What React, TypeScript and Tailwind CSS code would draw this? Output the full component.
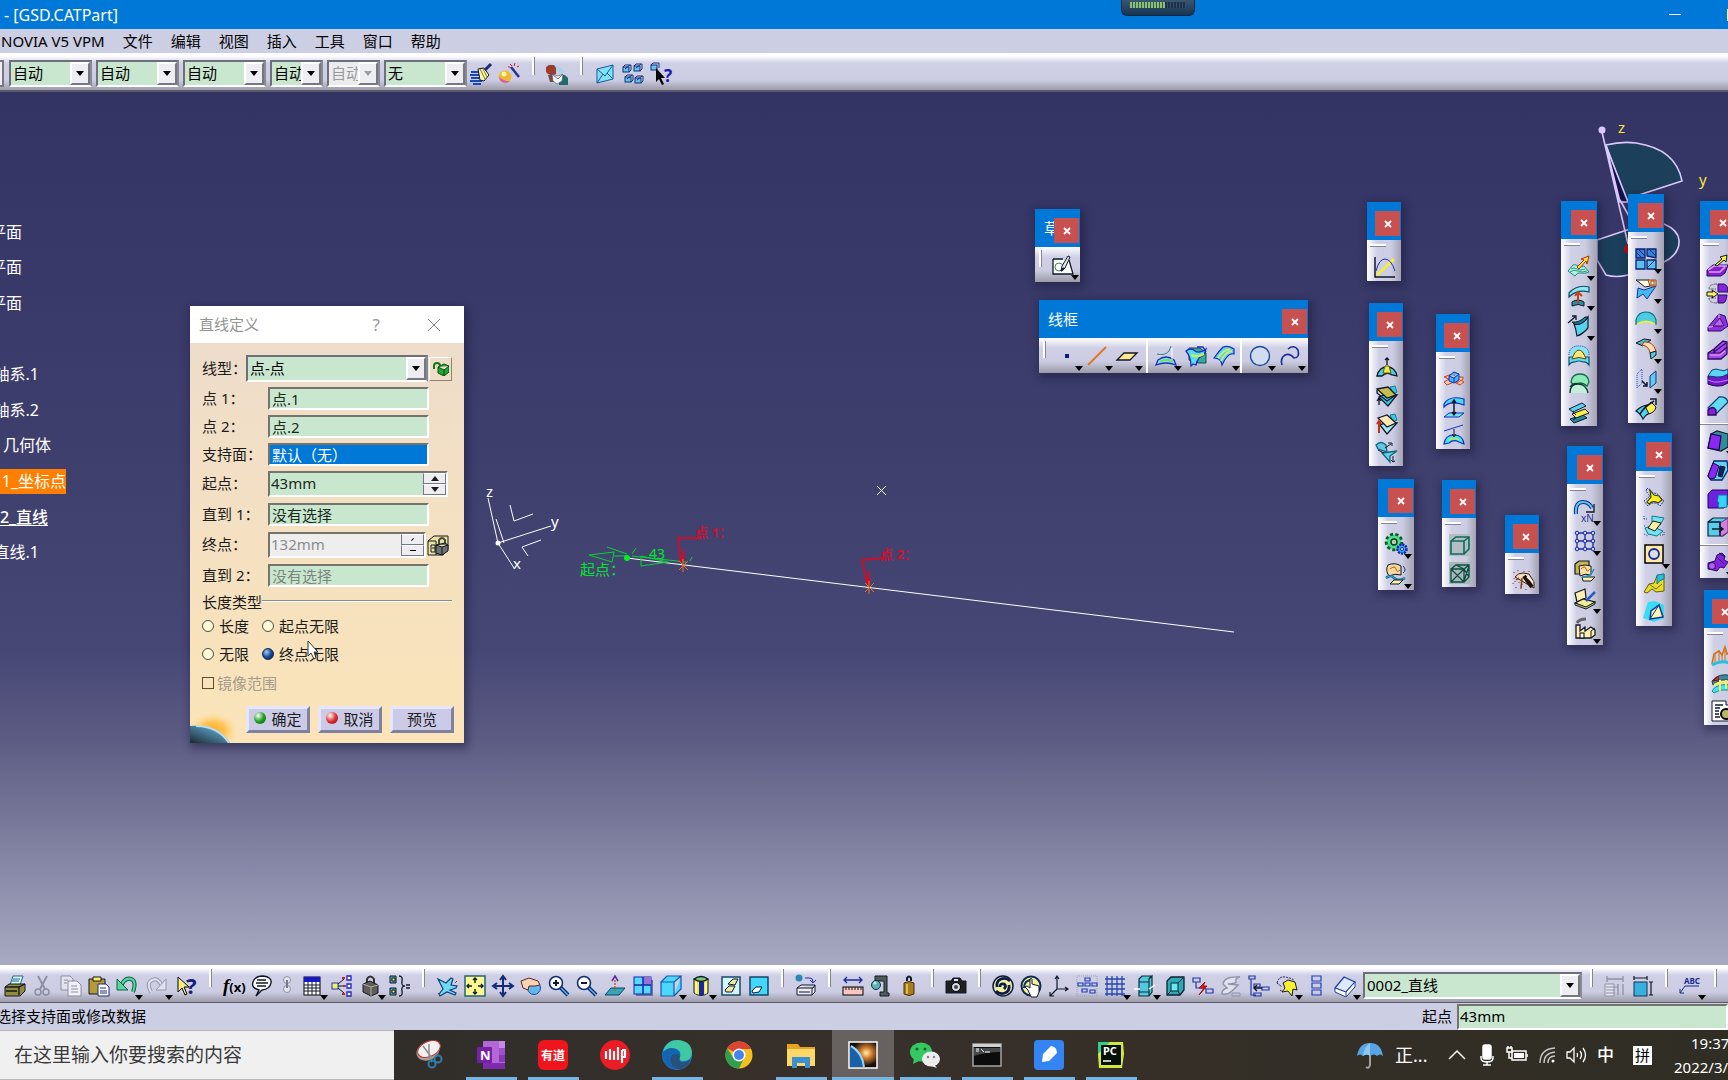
import React from "react";

type PathProps = { d: string; f?: string; s?: string; w?: number };

const P = ({ d, f = "none", s = "#101828", w = 1 }: PathProps) => (
  <path d={d} fill={f} stroke={s} strokeWidth={w} />
);

const icons: Record<string, React.ReactNode> = {
  // graphic properties
  brush: (
    <>
      <P d="M1 9h8M0 12h10M1 15h11M0 18h12M3 21h8" s="#1747b8" w={2} />
      <P d="M8 6l6-1 5 7-5 6-4-1z" f="#fff6b0" />
      <P d="M10 6l5 10M13 6l4 8" s="#8a7a20" />
      <P d="M15 7l6-6" s="#1a2a80" w={3} />
    </>
  ),
  wand: (
    <>
      <circle cx="7" cy="14" r="6.5" fill="#f0b830" />
      <path d="M1 14a6.500 6.500 0 0 0 11 4q-5 1-11-4z" fill="#c060d8" />
      <circle cx="6" cy="11" r="2.5" fill="#fff7a0" />
      <P d="M13 4l8 10" s="#28348c" w={2.5} />
      <P d="M12 1l2 2M17 0l-1 3M19 4l2-1M10 4h2" s="#e02020" />
    </>
  ),
  cubes: (
    <>
      <path d="M1 0l11 3 8 6-6 1z" fill="#a8d4e8" />
      <path d="M0 4l3-2h5l2 3v6H2L0 9z" fill="#a03a2c" />
      <path d="M2 12l5-2 4 3v6H4z" fill="#7a4a44" />
      <path d="M13 12h6l3 3v7h-9z" fill="#1f6a70" />
      <path d="M6 11l6 2 5-2-1 7-5 3-4-3z" fill="#f4f4f4" stroke="#505868" strokeWidth=".6" />
      <path d="M6 11l6 5 5-5" fill="none" stroke="#505868" strokeWidth=".8" />
    </>
  ),
  envelope: (
    <>
      <P d="M3 6L19 2v14L3 20z" f="#7fe3f2" s="#1c56a8" />
      <P d="M3 6l8 7 8-11M3 20l6-9M19 16l-6-6" s="#1c56a8" />
    </>
  ),
  fourCubes: (
    <>
      {[[1, 3], [12, 2], [3, 13], [13, 14]].map(([x, y]) => (
        <g key={x + "-" + y}>
          <rect x={x} y={y + 1} width="6" height="5" fill="#5ec4ea" stroke="#14307c" />
          <P d={`M${x} ${y + 1}l2-2h6v5l-2 2M${x + 2} ${y + 3}l5-4`} s="#14307c" />
        </g>
      ))}
    </>
  ),
  whatCube: (
    <>
      <rect x="1" y="2" width="6" height="5" fill="#5ec4ea" stroke="#14307c" />
      <P d="M1 2l2-2h6v5" s="#14307c" />
      <path d="M6 5v14l3-3 3 6 2-1-3-6h4z" fill="#000" />
      <text x="14" y="19" fontSize="17" fontWeight="700" fill="#1a1ab4" fontFamily="Noto Sans, sans-serif">?</text>
    </>
  ),
  // wireframe
  sketch: (
    <>
      <P d="M1 5h10M1 5v15h20L17 6" f="#fff" w={1.3} />
      <circle cx="7" cy="13" r="4" fill="none" stroke="#3c8c50" />
      <P d="M9 17l1-5 6-10 2 1-5 11z" f="#dfe6ea" />
      <P d="M9 17l3-3" w={2} />
    </>
  ),
  point: <rect x="9" y="9" width="4" height="4" fill="#0a1e78" />,
  line: <P d="M2 20L20 2" s="#e07828" w={2} />,
  plane: <P d="M1 15L8 8h13l-7 7z" f="#ffe98c" w={1.3} />,
  proj: (
    <>
      <P d="M3 15q8-6 16 0l2 5q-10-4-20 0z" f="#7fe3f2" s="#1c2cc0" w={1.3} />
      <P d="M5 17q6-4 13 0" s="#7ae05a" w={2} />
      <P d="M2 9q8 2 12-3l2-5" s="#2a8a7a" />
      <P d="M17 3v12" s="#fff" />
    </>
  ),
  inter: (
    <>
      <P d="M4 3h11l6 5v10h-7l-10-3z" f="#3aa898" s="#0c4c50" />
      <P d="M1 6q5-4 9 0 4 3 11-2l-2 6q-6 1-8 10l-3-1-2 2Q6 12 1 6z" f="#58dcf0" s="#1c2cc0" w={1.3} />
      <P d="M6 10q6 3 13-1" s="#c8f050" w={2.5} />
      <P d="M12 2h6l3 5" s="#1c2cc0" w={1.3} />
    </>
  ),
  parallel: (
    <>
      <P d="M1 13Q6 6 10 2q6-2 11 2v5q-6-2-12 11-1-7-8-7z" f="#56d0ee" s="#1c2cc0" w={1.2} />
      <P d="M5 13Q10 5 17 4M8 16q4-9 11-10" s="#c8f070" w={1.8} />
    </>
  ),
  circle: <circle cx="11" cy="11" r="9.5" fill="#d0dcf0" stroke="#1c4a9c" strokeWidth="1.4" />,
  spline: <P d="M9 4q6-5 10 1 2 8-4 8-4-5-9-3-5 3-3 10" s="#1c2c9c" w={1.6} />,
  graph: (
    <>
      <P d="M3 19L20 3" s="#f2f03c" w={3} />
      <P d="M1 1v20h20" w={1.5} />
      <P d="M2 15Q5 3 11 3t10 12" s="#2030a8" />
    </>
  ),
  // advanced surfaces
  dome: (
    <>
      <P d="M1 19q2-9 10-9t10 9l-5-1q-5-4-10 1z" f="#4cd0ea" w={1.3} />
      <P d="M7 16l2-7h4l2 7z" f="#f4e840" s="#5c5810" />
      <P d="M11 8V1M9 3l2-2 2 2" w={1.3} />
    </>
  ),
  layers: (
    <>
      <P d="M3 12l5-2 13 0-9 11z" f="#35c8e0" w={1.3} />
      <P d="M14 2l5-1 2 6-4 2z" f="#35c8e0" s="#1c7c90" />
      <P d="M1 4l11-2 8 8-9 3z" f="#c8bc4c" w={1.3} />
      <P d="M3 13v7M1 16l2-3 2 3M1 5v3l10 8 9-6" w={1.3} />
    </>
  ),
  layersRed: (
    <>
      <P d="M4 12l5-2 12 0-10 11z" f="#9fe8f0" w={1.3} />
      <P d="M14 2l5-1 2 6-4 2z" f="#35c8e0" s="#1c7c90" />
      <P d="M2 5l9-3 9 8-9 4z" f="#fbe6b4" w={1.3} />
      <P d="M3 20V8M1 11l2-3 2 3" s="#c83010" w={2} />
    </>
  ),
  blend: (
    <>
      <P d="M0 4q5-5 10 0l1 7-9-3z" f="#5cc8e6" s="#14647c" w={1.3} />
      <P d="M6 12l15-2-7 5 0 6z" f="#5cd4ee" s="#14647c" w={1.3} />
      <P d="M2 9l6 3M9 7l6-4M12 2h4v3M17 15v6M15 19l2 2 2-1" />
    </>
  ),
  flatCube: (
    <>
      <P d="M1 9l8-3 12 8-4 3-6-3-7 3-3-3 5-3z" f="#f6c8a0" s="#d04020" />
      <P d="M13 9h7v2l-6 4z" f="#f6c8a0" s="#d04020" />
      <P d="M6 8l5-4 5 2v6l-5 3-5-2zM6 8l5 2 5-4M11 10v5" f="#3ab8f0" s="#1030c8" />
    </>
  ),
  thick: (
    <>
      <P d="M1 8q5-9 20-5v6Q7 4 1 11z" f="#4cd8f0" s="#1030c8" w={1.2} />
      <P d="M1 21l5-4h15l-5 4z" f="#6fe8f0" s="#1030c8" />
      <P d="M11 5v13M9 7l2-3 2 3M9 16l2 3 2-3" w={1.5} />
    </>
  ),
  wrap: (
    <>
      <P d="M1 7l19-6" s="#2030c0" />
      <P d="M1 20q1-9 10-9t10 9l-5-2q-5-3-10 1z" f="#4ce0f0" s="#1030c8" w={1.2} />
      <P d="M6 16q5-3 10 0" s="#a0f060" w={2} />
      <P d="M11 5v8M9 10l2 3 2-3" />
    </>
  ),
  gear: (
    <>
      <circle cx="9" cy="9" r="7.5" fill="#50d888" stroke="#0c5c30" strokeWidth="3.5" strokeDasharray="3 2.200" />
      <circle cx="9" cy="9" r="6.5" fill="#50e088" />
      <circle cx="9" cy="9" r="3" fill="#b8ccb8" stroke="#0c3c20" strokeWidth="1.4" />
      <circle cx="17" cy="16" r="4.5" fill="#38a8f4" stroke="#1028a0" strokeWidth="2.500" strokeDasharray="2 1" />
      <circle cx="17" cy="16" r="1.5" fill="#fff" stroke="#1028a0" />
    </>
  ),
  scroll: (
    <>
      <P d="M3 2q7-3 13 1v9q-6-2-12 1Q0 7 3 2z" f="#f8d898" />
      <P d="M5 6q5-4 6 0t4 1" s="#a06020" />
      <P d="M1 15q5-4 8 0 5 4 11 0" s="#105c90" w={2.5} />
      <P d="M1 15q5-4 8 0 5 4 11 0" s="#40b8d8" />
      <P d="M5 21l4-4h9l-4 4z" f="#fff3a0" />
      <P d="M18 3q4 4 0 7" s="#1c4080" />
    </>
  ),
  cube: (
    <>
      <rect width="22" height="22" fill="#b4bcc4" />
      <P d="M2 7h13v13H2zM2 7l5-4h13v12l-5 5M15 7l5-4" s="#0c6c5c" w={1.6} />
    </>
  ),
  cubeX: (
    <>
      <rect width="22" height="22" fill="#a8b8b8" />
      <P d="M2 7h13v13H2zM2 7l5-4h13v12l-5 5M15 7l5-4M2 7l13 13M15 7L2 20M15 7l5 8M20 4l-5 15M7 3l8 4" s="#0c4c44" w={1.3} />
    </>
  ),
  hammer: (
    <>
      <P d="M2 3v1M6 1v1M12 2v1M2 9v1M1 14v1M4 18v1M9 19v1M17 2v1M7 13v1M3 12v1M14 20v1M10 15v1" s="#a02020" />
      <P d="M3 8q3-4 8-4l6 1 5 8v6z" f="#f4dcc0" s="#382010" />
      <P d="M7 9l-3 2M10 9l-1 10" s="#7c4018" w={1.5} />
      <P d="M12 7l8 11" w={4} s="#201008" />
      <P d="M15 8l6 5" s="#fff" w={1.5} />
    </>
  ),
  // surfaces
  extrude: (
    <>
      <P d="M0 16l5-6q3-1 5 1t6 0l5 6q-4 2-8 1t-6 3z" f="#b4f0d8" s="#1c8c80" />
      <P d="M3 14q3-2 6 0t8 0M2 17q4-3 8-1t9 0" s="#2a9c90" />
      <P d="M9 12l7-7-3-1 8-3-2 8-1-3-7 8z" f="#ffe440" s="#b03010" />
    </>
  ),
  offset: (
    <>
      <P d="M1 8q8-9 20-6v5Q9 4 1 12z" f="#8ce8f4" s="#0c4c60" w={1.2} />
      <P d="M4 17q6-4 12 0v4q-6-3-12 0z" f="#2c8c9c" />
      <P d="M10 18V9M7 11l3-4 4 4" s="#c84010" w={2} />
    </>
  ),
  sweep: (
    <>
      <P d="M6 9q8 2 14-7v11q-5 6-11 8-1-7-3-12z" f="#54d4ee" w={1.2} />
      <P d="M6 9q8 2 14-7l-3 0q-6 6-13 5z" f="#1c8098" />
      <P d="M0 8l7-6M4 1h4v4" w={1.3} />
    </>
  ),
  fill: (
    <>
      <path d="M1 10q0-9 10-9t10 9" fill="#88e4f8" stroke="#1c2cc0" strokeDasharray="1 1" />
      <P d="M1 12h20v8q-3-4-6-3-4-2-8 0-3-1-6 3z" f="#60dcf0" s="#10506c" w={1.2} />
      <P d="M4 14q3-9 7-9t7 9q-7-3-14 0z" f="#fce870" s="#604c10" />
    </>
  ),
  loft: (
    <>
      <P d="M3 9q1-8 9-8t9 8l-2 4q-7-6-13 0z" f="#90e8b4" s="#0c6c50" w={1.3} />
      <P d="M2 20q0-9 8-9t10 9M2 14q4-6 12-2" f="#c0f0d8" s="#0c3c30" w={1.3} />
    </>
  ),
  blend2: (
    <>
      <P d="M2 18l13-4 4 3-13 5z" f="#1f8ca0" />
      <P d="M4 13l13-5 4 4-13 5z" f="#f8f040" />
      <P d="M1 8l13-6 4 3-13 6z" f="#58d4f0" />
      <P d="M5 11l3 3M8 17l-3 2" />
    </>
  ),
  // operations
  join: (
    <>
      <P d="M1 1h9v9H1zM12 1h9v9l-9-2z" f="#3a80d8" s="#08206c" w={1.3} />
      <P d="M1 12h9v9H1zM12 12h9v9h-9z" f="#5cc0f0" s="#08206c" w={1.3} />
      <P d="M3 1l7 7M1 4l6 6M14 1l7 7M12 20l8-8" s="#0a2c80" />
    </>
  ),
  split: (
    <>
      <P d="M3 10l6 2 12-4-9 13-4-5-6 4z" f="#44b8f0" s="#1038a0" />
      <P d="M1 2h13l1 6-5 1z" f="#fffbe0" />
      <P d="M13 2h8v6h-6z" f="#fce8a8" s="#a04010" />
      <rect x="16" y="3" width="3" height="4" fill="#fff" stroke="#a04010" />
    </>
  ),
  boundary: (
    <>
      <P d="M1 12Q3 4 11 4t10 8v4q-10-5-20 0z" f="#4ccce0" s="#0c6c80" w={1.2} />
      <P d="M2 16q9-5 18 0" s="#f0f040" w={2} />
    </>
  ),
  fillet: (
    <>
      <P d="M1 5l8-4 7 1-6 4-2 2z" f="#4cb8c8" />
      <P d="M9 4q9-1 12 9l-6 2q-1-7-8-8z" f="#fce0b0" s="#b03018" />
      <P d="M15 15l6-2v4l-5 4z" f="#4cccd8" />
    </>
  ),
  translate: (
    <>
      <path d="M2 6l5-5v14l-5 5z" fill="none" stroke="#1848c0" strokeDasharray="1 1" />
      <P d="M15 8l6-5v12l-6 5z" f="#60ccf4" s="#103080" />
      <P d="M7 13l5 5M12 14v4H8" w={1.5} />
    </>
  ),
  extrapol: (
    <>
      <P d="M1 13Q6 8 12 7l5 7q-6 2-9 7-3-6-7-8z" f="#50d4ec" w={1.2} />
      <P d="M10 8q5-1 6-4l5 5q-1 5-7 7z" f="#fcf050" />
      <P d="M5 16Q9 9 19 3M15 1h6v6" w={1.5} />
    </>
  ),
  // solids
  pad: (
    <>
      <P d="M0 15l6-5h15l-3 8-4 3H0z" f="#8420d0" s="#2c0860" />
      <P d="M1 15l6-4h13M2 17h11l5-5" s="#e0a0f8" w={1.6} />
      <P d="M8 10l7-6-2-2 7-2-1 7-2-2-7 6z" f="#fcf040" />
    </>
  ),
  groove: (
    <>
      <P d="M11 1h6q4 1 4 8H11zM11 12h9q-1 8-4 8h-5z" f="#8424d8" s="#2c0860" />
      <path d="M10 1Q2 1 2 6h7M10 20q-8 0-8-5h7" fill="none" stroke="#666" strokeDasharray="3 1" />
      <P d="M0 9h6l-1-2 6 4-6 4 1-2H0z" f="#fcf060" />
    </>
  ),
  rib: (
    <>
      <P d="M1 16L12 3l6 2 3 10-7 5H1z" f="#9030e0" s="#2c0860" />
      <P d="M1 16h4l8-9 4 9M12 3v4" s="#e0b0fc" />
      <P d="M6 15l7-8 4 8z" f="#b868f0" s="#2c0860" />
    </>
  ),
  stiff: (
    <>
      <P d="M1 14l6-4L16 2l4 1v12l-6 5H1z" f="#a848ec" s="#2c0860" w={1.3} />
      <P d="M1 14h12l7-6M7 10v4M7 13L19 4" s="#2c0860" w={1.2} />
      <P d="M3 16h10l5-4" s="#e0b0fc" w={1.2} />
    </>
  ),
  thickSurf: (
    <>
      <P d="M1 9q5-2 8 0t12-2v9q-6 4-12 3t-8-2z" f="#7018c8" s="#1c0450" />
      <P d="M1 9l4-6q4-2 8 0t8-1v5q-6 4-12 3T1 9z" f="#58d8f0" s="#083c78" />
      <P d="M1 13q6 3 11 2t9-2" s="#c080f8" />
    </>
  ),
  closeSurf: (
    <>
      <P d="M1 13L12 2q7-1 9 5L9 19z" f="#64dcf0" s="#0c4078" w={1.3} />
      <P d="M1 20v-5q5-5 8 0v5z" f="#8420d8" s="#2c0860" w={1.3} />
    </>
  ),
  draft: (
    <>
      <P d="M4 4l6-3 11 3v13l-7 4L1 18z" f="#348c98" s="#082430" w={1.2} />
      <P d="M4 4l10 2-2 14-11-2z" f="#8828f0" s="#1c0450" w={1.2} />
    </>
  ),
  shell: (
    <>
      <P d="M1 16L7 1h13l1 9-6 10H4z" f="#60d4f0" s="#0c2070" w={1.3} />
      <P d="M1 16L6 3l6 3-4 12-5 1z" f="#8828f0" s="#1c0450" />
      <P d="M13 6l5 1-3 10-4-1z" f="#082468" />
    </>
  ),
  thread: (
    <>
      <P d="M1 6l4-4h16v14l-4 4H1z" f="#7020e0" s="#1c0450" />
      <P d="M11 7h9v12l-8 1-1-3 1-2-2-2 1-3z" f="#34d4f4" s="#0c70a0" />
    </>
  ),
  replace: (
    <>
      <P d="M1 6l5-4h15v14l-5 4H1z" f="#58ccec" s="#0c2840" w={1.2} />
      <P d="M13 7l8-5v14l-6 4h-2z" f="#d080d8" s="#703080" />
      <P d="M1 6h12v14M5 13h10M12 10l4 3-4 3" w={1.5} />
    </>
  ),
  assemble: (
    <>
      <P d="M1 12l7-2 2-6 5-2 3 3-1 4 4 2-4 6-4-1-3 4-4-1-5-1z" f="#8420e0" s="#2c0860" />
      <circle cx="5" cy="15" r="3.5" fill="#b060f4" stroke="#2c0860" />
      <P d="M9 5l8 8M12 2l6 4" s="#2c0860" />
    </>
  ),
  analysis: (
    <>
      <P d="M1 20l2-10 5-3 3 4 3-8 2 7 5-3v13" s="#d07018" w={1.5} />
      <P d="M4 19V9M8 18V6M11 18v-9M14 18V4M18 18v-8" s="#d07018" />
      <P d="M1 21q10-6 20-1" s="#28c0e0" w={3} />
    </>
  ),
  analysis2: (
    <>
      <P d="M1 9Q8 0 21 4v5Q10 5 2 13z" f="#3c889c" s="#1c3c50" />
      <P d="M1 19q4-8 20-6v6q-10-3-18 2z" f="#48e4ec" s="#1890a0" />
      <P d="M3 13q8-4 18-3M9 8v11M15 8v9" s="#f0f060" w={2} />
      <P d="M2 9l5-5 1 4z" f="#d03020" s="#801010" />
    </>
  ),
  report: (
    <>
      <P d="M1 1h14v4h6v16H1z" f="#fff" />
      <P d="M4 5h8M4 8h5M4 11h4M4 14h4M4 17h5" w={1.3} />
      <circle cx="15" cy="14" r="5" fill="#b8b868" stroke="#000" strokeWidth="2" />
    </>
  ),
  // replication
  repeat: (
    <>
      <P d="M2 14Q1 2 9 2q6 0 9 6" s="#102c80" w={4} />
      <P d="M2 14Q1 2 9 2q6 0 9 6" s="#58c8ec" w={2} />
      <P d="M20 4v8h-8" w={1.3} />
      <text x="7" y="22" fontSize="10" fill="#1a2a90" fontFamily="Noto Sans, sans-serif">xN</text>
    </>
  ),
  pattern: (
    <>
      <P d="M3 3h16M3 11h16M3 19h16M3 3v16M11 3v16M19 3v16" s="#1c2c9c" w={1.3} />
      {[3, 11, 19].map((x) =>
        [3, 11, 19].map((y) => (
          <circle key={x * 30 + y} cx={x} cy={y} r="1.8" fill="#c8ccf0" stroke="#1c2c9c" />
        ))
      )}
    </>
  ),
  copyGeo: (
    <>
      <P d="M1 4l4-3h10v13H1z" f="#c8b450" w={1.2} />
      <P d="M5 6q6-2 12 0v9q-6-2-11 1z" f="#fbe0a4" />
      <P d="M7 9q4-4 5 0t4 0" s="#a06020" />
      <P d="M8 17l13 0-4 4-8 0z" f="#fff3a0" />
      <P d="M8 17q9 0 12-8" s="#2090c0" w={1.5} />
    </>
  ),
  edit: (
    <>
      <P d="M1 5l10-4 1 9-9 4z" f="#fff0b0" w={1.2} />
      <P d="M1 15l8-4 12 3-9 6z" f="#f4ec90" w={1.2} />
      <P d="M21 14v2l-9 5-11-4v-2l11 4z" f="#c4d080" />
      <P d="M12 13l9-9" s="#2858c0" w={2.5} />
    </>
  ),
  factory: (
    <>
      <P d="M2 20V7h4v6l5-4v4l6-4 4 3v5l-4 3z" f="#fff0b0" w={1.3} />
      <P d="M17 20v-7l4-3" />
      <rect x="6" y="15" width="4" height="5" fill="#fff" stroke="#000" />
      <P d="M3 5q2-4 9-4" s="#666" w={3} />
    </>
  ),
  bump: (
    <>
      <path d="M4 1l5 5q6 0 7 3l5 5-4 5q-6-6-12 0l-4-5 6-5-4-5z" fill="none" stroke="#2040a0" strokeDasharray="2 1" />
      <P d="M7 3l4 5 5 1 3 4-4 3q-5-3-9 1l-2-2 4-5z" f="#fcf020" s="#404000" w={1.2} />
    </>
  ),
  wrapCurve: (
    <>
      <path d="M1 4h3M1 1v3M1 19l4 2M17 20h4v-4M1 11h2" fill="none" stroke="#2a4a90" strokeDasharray="1 1" />
      <P d="M9 1l12 2-4 7-8-3z" f="#70e4f0" s="#107890" />
      <P d="M2 13l6-2 12 5-6 5-9-2z" f="#70e4f0" s="#107890" />
      <P d="M10 6l8 2-6 8-7-3z" f="#fcf0a0" />
    </>
  ),
  hole: (
    <>
      <rect x="2" y="2" width="18" height="18" fill="#ffe9a8" stroke="#000" strokeWidth="1.5" />
      <circle cx="11" cy="11" r="5" fill="#d8dce8" stroke="#182890" strokeWidth="1.8" />
    </>
  ),
  morph: (
    <>
      <P d="M1 19l5-8 5-1 3-7 7-2v17l-8 1-4-3-5 4z" f="#e8dc28" s="#60600c" />
      <P d="M14 2l7-1v5q-5 1-7 5z" f="#28c0dc" s="#107890" />
      <P d="M6 11l7 5 6-5" s="#706c10" />
    </>
  ),
  develop: (
    <>
      <path d="M5 1l7-1 9 4v13l-10 4-11-4z" fill="#38dcf4" />
      <P d="M7 18l1-8 8-6 4 12z" f="#fff4b0" s="#103898" w={1.5} />
      <P d="M7 18L16 4" s="#103898" />
    </>
  ),
  // standard
  print: (
    <>
      <P d="M6 10l3-9h10l-3 9z" f="#d8f8fc" s="#20687c" />
      <P d="M1 12l4-3h16v7l-5 5H1z" f="#908c38" />
      <P d="M1 12h14l6-3M15 12v8M2 16h11" w={1.3} />
      <P d="M9 4h7M8 6h7" s="#20687c" />
    </>
  ),
  cut: (
    <>
      <P d="M6 1l7 13M15 1L8 14" s="#8c8ca0" w={1.8} />
      <circle cx="6" cy="17" r="3" fill="none" stroke="#8c8ca0" strokeWidth="1.5" />
      <circle cx="14" cy="17" r="3" fill="none" stroke="#8c8ca0" strokeWidth="1.5" />
    </>
  ),
  copy: (
    <>
      <P d="M1 1h9l3 3v11H1z" f="#e4e4f0" s="#8c8ca0" />
      <P d="M8 6h9l4 4v11H8zM11 11h6M11 14h7M11 17h7M4 5h4M4 8h3" f="#f0f0f8" s="#8c8ca0" />
    </>
  ),
  paste: (
    <>
      <P d="M1 4h16v15H1z" f="#b89838" />
      <P d="M5 2h8v4H5z" f="#f8f060" />
      <P d="M10 9h8l3 3v9H10z" f="#fff" s="#182c80" />
      <P d="M12 13h6M12 16h7M12 18h7" s="#182c80" />
    </>
  ),
  undo: (
    <>
      <P d="M5 11Q9 2 15 4t2 13" s="#0c6040" w={4} />
      <P d="M5 11Q9 2 15 4t2 13" s="#58d8a0" w={2} />
      <P d="M1 4v11h11z" f="#58d8a0" s="#0c6040" />
    </>
  ),
  redo: (
    <>
      <P d="M16 11Q12 2 6 5t-1 12" s="#9898ac" w={4} />
      <P d="M16 11Q12 2 6 5t-1 12" s="#e0e0f0" w={2} />
      <P d="M20 4v11H10z" f="#e0e0f0" s="#9898ac" />
    </>
  ),
  help: (
    <>
      <path d="M2 2v15l4-4 3 7 2-1-3-7h5z" fill="#ffee80" stroke="#000" />
      <text x="10" y="19" fontSize="22" fontWeight="700" fill="#142078" fontFamily="Noto Sans, sans-serif">?</text>
    </>
  ),
  fx: (
    <text x="0" y="17" fontSize="19" fontStyle="italic" fontWeight="700" fontFamily="Liberation Serif, serif">
      f<tspan fontSize="13" fontStyle="normal" fontFamily="Noto Sans, sans-serif">(x)</tspan>
    </text>
  ),
  speech: (
    <>
      <P d="M5 21l3-6Q0 13 2 7t10-6q9 1 8 7t-9 7z" f="#fff" w={1.4} />
      <P d="M6 5h9M5 8h12M6 11h9" w={1.3} />
    </>
  ),
  chain: (
    <>
      <circle cx="11" cy="5" r="3.5" fill="#e4e4f0" stroke="#9090a4" />
      <circle cx="11" cy="14" r="3.5" fill="#e4e4f0" stroke="#9090a4" />
      <P d="M11 5v8" s="#787890" w={2} />
    </>
  ),
  table: (
    <>
      <rect x="3" y="2" width="16" height="18" fill="#fff" stroke="#000" />
      <rect x="3" y="2" width="16" height="5" fill="#1818c8" />
      <P d="M3 10h16M3 13h16M3 16h16M7 7v13M11 7v13M15 7v13" />
    </>
  ),
  graphTree: (
    <>
      <rect x="1" y="8" width="6" height="6" fill="#f8f060" stroke="#1838a8" />
      <P d="M16 1h4v4h-4zM16 9h4v4h-4zM16 17h4v4h-4z" f="#fff" s="#1820d0" w={1.3} />
      <P d="M7 9l6-5M7 11h8M7 13l6 5" />
      <P d="M11 3h3M12 11h2M11 19h3" s="#d02020" w={2} />
    </>
  ),
  lock: (
    <>
      <P d="M8 9V4q3-5 7 0v7" s="#303030" w={2} />
      <P d="M4 9l7-3 8 4v8l-7 3-8-4z" f="#605c58" />
      <P d="M4 9l8 3 7-2M12 12v9" s="#b0aca0" />
    </>
  ),
  brace: (
    <>
      <P d="M1 1h6v7H1zM1 13h6v7H1z" f="#50a8b0" />
      <P d="M3 3h3v3H3zM3 15h3v3H3z" f="#f0f060" />
      <P d="M10 1q4 0 3 5t3 5q-4 0-3 5t-3 5M17 10h4M17 13h4" w={1.3} />
    </>
  ),
  // view
  fly: (
    <>
      <P d="M2 4l8 4 5-5 2 1-2 6 6 1-1 2-6 2 6 3-1 2-8-3-7 4-1-2 4-5-4-8z" f="#70d8f0" s="#0c4080" w={1.2} />
      <P d="M4 20l-2-2M19 8l2-2" s="#c02020" />
    </>
  ),
  fit: (
    <>
      <rect x="1" y="1" width="20" height="20" fill="#fff890" stroke="#186878" strokeWidth="1.5" />
      <P d="M11 3v5M11 14v5M3 11h5M14 11h5M9 5l2-2 2 2M9 17l2 2 2-2M5 9l-2 2 2 2M17 9l2 2-2 2" w={1.4} />
    </>
  ),
  pan: <P d="M11 2v18M2 11h18M8 5l3-4 3 4M8 17l3 4 3-4M5 8l-4 3 4 3M17 8l4 3-4 3" s="#142c78" w={2} />,
  rotate: (
    <>
      <circle cx="14" cy="13" r="6.5" fill="#60b8f0" stroke="#1848a0" />
      <P d="M1 6l8-3 9 3 2 4-5 1-6 0-1 4-5-2z" f="#fbd4b8" s="#582818" />
    </>
  ),
  zoomIn: (
    <>
      <P d="M12 12l8 8" s="#102c80" w={4} />
      <P d="M13 13l7 7" s="#58b8e0" w={1.5} />
      <circle cx="8" cy="8" r="6.5" fill="#fff" stroke="#103070" strokeWidth="1.6" />
      <P d="M5 8h6M8 5v6" w={2} />
    </>
  ),
  zoomOut: (
    <>
      <P d="M12 12l8 8" s="#102c80" w={4} />
      <P d="M13 13l7 7" s="#58b8e0" w={1.5} />
      <circle cx="8" cy="8" r="6.5" fill="#fff" stroke="#103070" strokeWidth="1.6" />
      <P d="M5 8h6" w={2} />
    </>
  ),
  normal: (
    <>
      <P d="M1 20l6-7h14l-6 7z" f="#30a8b8" s="#0c4070" />
      <path d="M11 16V5" stroke="#c06030" strokeWidth="1.5" strokeDasharray="2 1" />
      <P d="M8 6l3-5 3 5" s="#6028a0" w={1.5} />
    </>
  ),
  multi: (
    <>
      <rect x="4" y="5" width="17" height="16" fill="#6c74a8" />
      <rect x="2" y="2" width="17" height="17" fill="#58d8fc" stroke="#1028b0" />
      <rect x="11" y="2" width="8" height="8" fill="#9c70d8" />
      <P d="M2 10h17M11 2v17" s="#1028b0" w={1.5} />
    </>
  ),
  isoCube: <P d="M1 7h13v14H1zM1 7l6-6h14l-7 6M21 1v13l-7 7" f="#4cd8fc" s="#1858b8" w={1.2} />,
  cylinder: (
    <>
      <P d="M4 4v14q7 5 14 0V4z" f="#f0e840" />
      <path d="M9 7h5v13H9z" fill="#1828a0" />
      <P d="M4 4q7-5 14 0-7 5-14 0z" f="#78c878" w={1.4} />
      <P d="M6 7v12M16 7v12" s="#fff" />
    </>
  ),
  hide: (
    <>
      <rect x="2" y="2" width="18" height="18" fill="#d0f8fc" stroke="#103c60" strokeWidth="1.4" />
      <P d="M8 9l5-5h5l-3 6zM5 15l4-4h6l-3 6H6z" f="#f0e8a0" />
    </>
  ),
  swap: (
    <>
      <rect x="2" y="2" width="18" height="18" fill="#40d8fc" stroke="#103c60" strokeWidth="1.4" />
      <P d="M4 16l4-4h6l-3 5-6 1z" f="#fff" />
    </>
  ),
  toggle: (
    <>
      <circle cx="4" cy="3" r="3.5" fill="#2888b8" />
      <P d="M10 3h5q3 0 3 4M15 5l3 3 3-3" s="#1828b0" />
      <P d="M2 13l4-3h14l-2 3zM2 13v7h15l3-3v-7M17 13v7M4 17h11" f="#ececf4" />
    </>
  ),
  // measure
  ruler: (
    <>
      <P d="M2 5h18M5 2L2 5l3 3M17 2l3 3-3 3" s="#1828a0" w={1.3} />
      <rect x="1" y="12" width="20" height="8" fill="#fbc8c0" stroke="#000" />
      <P d="M4 12v3M7 12v3M10 12v3M13 12v3M16 12v3M19 12v3" />
    </>
  ),
  caliper: (
    <>
      <P d="M5 1h12v17h2v3h-9v-4h4V6H5z" f="#505c58" />
      <circle cx="6" cy="10" r="4.5" fill="#58b4b8" stroke="#182c30" />
      <circle cx="5" cy="8" r="1.500" fill="#c8f0f0" />
    </>
  ),
  weight: (
    <>
      <P d="M9 6V3q2-3 4 0v3" w={2} />
      <P d="M6 8q5-3 10 0v11q-5 3-10 0z" f="#a87c20" s="#483008" />
      <P d="M9 9v10" s="#e0bc50" w={2} />
    </>
  ),
  camera: (
    <>
      <P d="M1 6h5l2-3h7l2 3h4v12H1z" f="#202020" />
      <circle cx="11" cy="12" r="4.5" fill="#d8dce0" stroke="#000" />
      <circle cx="11" cy="12" r="2" fill="#404858" />
      <rect x="9" y="4" width="4" height="2" fill="#e0e0e8" />
    </>
  ),
  // tools
  swirl: (
    <>
      <circle cx="11" cy="11" r="10" fill="#f0f0a0" stroke="#0c1c40" strokeWidth="1.5" />
      <P d="M18 6Q14 2 9 4T5 12M4 16q4 4 9 2t4-8M8 12q0-4 4-3 3 2 0 5" s="#0c1c48" w={2.8} />
    </>
  ),
  handSwirl: (
    <>
      <circle cx="11" cy="11" r="9.5" fill="#f0f0a0" stroke="#0c2c50" strokeWidth="2" />
      <P d="M4 13q0-8 8-8" s="#183060" w={2} />
      <P d="M8 15l-3-3 2-1 3 2V4q2-1 2 0v5l7 2v6l-2 5h-6z" f="#fff" />
    </>
  ),
  axis: <P d="M9 1v13h11M9 14l-7 7M7 4l2-3 2 3M17 12l3 2-3 2M2 17v4h4" w={1.2} />,
  list: (
    <>
      <rect x="1" y="1" width="20" height="20" fill="none" stroke="#a0a0b4" strokeDasharray="1 1" />
      <P d="M9 3h5v3H9zM2 8h5v3H2zM9 8h5v3H9zM16 8h5v3h-5zM6 14h5v3H6zM14 15h5v3h-5z" s="#2040b8" w={1.2} />
    </>
  ),
  grid: <P d="M3 1v20M8 1v20M13 1v20M18 1v20M1 4h20M1 9h20M1 14h20M1 19h20" s="#2848b0" w={1.3} />,
  sectionBox: (
    <>
      <P d="M5 4l3-3h9l-2 3v17H5zM15 4l3-3v16l-3 4" f="#54c8dc" s="#0c3040" w={1.2} />
      <P d="M0 14h6M15 14l6-4" s="#fff" w={1.5} />
      <P d="M5 7h10M5 17h10" s="#0c3040" />
    </>
  ),
  boxTeal: (
    <>
      <P d="M3 6l4-4h13v13l-4 5H3z" f="#30a8b8" s="#0c2430" w={1.3} />
      <P d="M7 8h7v8H7zM14 8l6-6M7 16l-4 4M14 16l2 4" f="#68e8f0" s="#0c2430" />
    </>
  ),
  bolt: (
    <>
      <P d="M1 3h7v4H1zM14 14h7v4h-7zM4 7v6h10" s="#2038a8" w={1.2} />
      <P d="M13 7L7 13h5l-5 7 8-9h-4z" f="#d02020" s="#a01010" />
    </>
  ),
  greyCurve: (
    <>
      <P d="M3 9Q4 1 20 2q-5 1-4 4t-8 3l10 1-6 6q-4 4-10 3 0-5 5-6z" f="#e0e0ec" s="#9090a8" w={1.4} />
      <P d="M12 18h8v3h-8z" s="#9090a8" />
    </>
  ),
  treeIn: (
    <>
      <P d="M1 1h6v3H1zM3 4v16h5M14 12h7v3h-7zM6 18h7v3H6zM6 9h6v3H6z" s="#2038a8" w={1.2} />
      <P d="M14 13H6M9 10l-3 3 3 3" w={1.4} />
    </>
  ),
  paint: (
    <>
      <path d="M1 8q2-7 8-6t9 3M1 8l5 4M4 15l3 2" fill="none" stroke="#202060" strokeDasharray="2 1" />
      <P d="M7 8l5-3 7 2 2 8-4-1-1 7-4-5-6 1 3-4z" f="#fcf030" />
    </>
  ),
  stack: <P d="M6 1h9v5H6zM6 8h9v5H6zM6 15h9v5H6z" s="#2040b8" w={1.2} />,
  book: (
    <>
      <P d="M1 13l9-11 11 5-9 10z" f="#dceaff" s="#2040a0" w={1.3} />
      <P d="M1 13v4l11 5 9-10V7l-9 10z" f="#fff" s="#2040a0" />
      <P d="M12 17v4" s="#2040a0" />
    </>
  ),
  dimGrey: (
    <>
      <P d="M3 4h16M3 1v6M19 1v6M14 9v11M19 9v11" s="#9090a8" w={1.3} />
      <P d="M1 9h9v12H1zM2 12h12M2 15h9M2 18h9" f="#e4e4ee" s="#9090a8" />
    </>
  ),
  dim: (
    <>
      <P d="M2 3h13M2 1v4M15 1v4M19 7v13M17 7h4M17 20h4" w={1.2} />
      <rect x="2" y="7" width="13" height="14" fill="#38b0dc" stroke="#103060" />
    </>
  ),
  abc: (
    <>
      <text x="5" y="9" fontSize="8" fontWeight="700" fill="#182890" fontFamily="Noto Sans, sans-serif">ABC</text>
      <P d="M6 11h14M6 11l-5 7M1 14v4h4" s="#182890" />
    </>
  ),
};

const Icon = ({ name }: { name: string }) => (
  <svg viewBox="0 0 22 22" className="size-[22px] shrink-0 overflow-visible" aria-hidden="true">
    {icons[name]}
  </svg>
);

const Caret = ({ className = "" }: { className?: string }) => (
  <svg viewBox="0 0 8 5" className={`h-[5px] w-2 shrink-0 ${className}`} aria-hidden="true">
    <path d="M0 0h8L4 5z" fill="currentColor" />
  </svg>
);

type ComboProps = { id: string; label: string; value: string; width: string; disabled?: boolean };

const Combo = ({ id, label, value, width, disabled = false }: ComboProps) => (
  <div
    className={`relative flex h-[27px] shrink-0 border-2 border-t-[#6f6f7c] border-l-[#6f6f7c] border-r-[#8a8a94] border-b-white ${width} ${
      disabled ? "bg-[#ececee] text-[#9a9aa0]" : "bg-[#c9e7cf] text-black"
    }`}
  >
    <select
      id={id}
      aria-label={label}
      disabled={disabled}
      className="w-full appearance-none bg-transparent pl-[2px] pr-5 opacity-100 outline-none"
    >
      <option>{value}</option>
    </select>
    <span className="pointer-events-none absolute inset-y-0 right-0 flex w-5 items-center justify-center border-2 border-t-white border-l-white border-r-[#77777f] border-b-[#77777f] bg-[#eeeef2]">
      <Caret />
    </span>
  </div>
);

const ToolSep = ({ width = "w-[19px]" }: { width?: string }) => (
  <div className={`flex h-full shrink-0 justify-center ${width}`}>
    <div className="h-[18px] w-[3px] border-r border-[#85859a] bg-white" />
  </div>
);

const ToolButton = ({ name, menu = false, narrow = false }: { name: string; menu?: boolean; narrow?: boolean }) => (
  <button
    type="button"
    aria-label={name}
    className={`relative flex h-7 shrink-0 items-center ${menu ? "w-[30px] pl-[3px]" : narrow ? "w-[22px]" : "w-7 pl-[3px]"}`}
  >
    <Icon name={name} />
    {menu && <Caret className="absolute right-0 bottom-0" />}
  </button>
);

const menus = ["文件", "编辑", "视图", "插入", "工具", "窗口", "帮助"];

const TitleBar = () => (
  <header className="relative flex h-[29px] items-center justify-between bg-[#0078d7] pl-1 text-white">
    <h1 className="text-[16px]">- [GSD.CATPart]</h1>
    <div className="flex items-center gap-[46px]">
      <button type="button" aria-label="最小化" className="h-4 w-3">
        <span className="block h-px w-3 bg-white" />
      </button>
      <span className="h-3 w-px bg-white" />
    </div>
    <div className="absolute top-0 left-[1121px] flex h-4 w-[74px] items-start rounded-b-md border border-t-0 border-[#0b2a47] bg-linear-to-b from-[#3a5872] to-[#173452] px-2 pt-[2px]">
      <div className="h-[6px] w-[35px] bg-[repeating-linear-gradient(90deg,#8fbf6a_0_2px,#2c5a66_2px_3px)]" />
      <div className="h-[6px] w-[21px] bg-[repeating-linear-gradient(90deg,#1c3248_0_2px,#34506a_2px_3px)]" />
    </div>
  </header>
);

const MenuBar = () => (
  <nav className="flex h-6 items-center gap-[18px] bg-[#cccee4]">
    <a href="#vpm" className="pl-px whitespace-nowrap">
      NOVIA V5 VPM
    </a>
    {menus.map((m) => (
      <a key={m} href={`#${m}`} className="whitespace-nowrap">
        {m}
      </a>
    ))}
  </nav>
);

const barSkin =
  "bg-[linear-gradient(to_bottom,#fff_0,#fff_3px,#cfd0e6_10px,#cccde3_27px,#9b9ba8_100%)]";

const GraphicBar = () => (
  <div className={`flex h-[39px] items-center border-b-2 border-[#5a5a68] pt-1 ${barSkin}`}>
    <div className="mr-[5px] h-[27px] w-1 shrink-0 border-2 border-l-0 border-[#77777f] bg-[#eeeef2]" />
    <div className="flex items-center gap-1">
      <Combo id="c1" label="线宽" value="自动" width="w-[83px]" />
      <Combo id="c2" label="线型" value="自动" width="w-[83px]" />
      <Combo id="c3" label="点" value="自动" width="w-[83px]" />
      <Combo id="c4" label="渲染" value="自动" width="w-[53px]" />
      <Combo id="c5" label="颜色" value="自动" width="w-[53px]" disabled />
      <Combo id="c6" label="图层" value="无" width="w-[83px]" />
    </div>
    <ToolButton name="brush" />
    <ToolButton name="wand" />
    <ToolSep width="w-5" />
    <ToolButton name="cubes" />
    <ToolSep width="w-5" />
    <ToolButton name="envelope" />
    <ToolButton name="fourCubes" />
    <ToolButton name="whatCube" />
  </div>
);

const tree = [
  { text: "平面", cls: "w-[22px]" },
  { text: "平面", cls: "w-[22px]" },
  { text: "平面", cls: "w-[22px]" },
  { text: "", cls: "w-px" },
  { text: "轴系.1", cls: "w-[39px]" },
  { text: "轴系.2", cls: "w-[39px]" },
  { text: "几何体", cls: "w-[51px]" },
  { text: "1_坐标点", cls: "w-[66px] bg-[#ff8000]" },
  { text: "2_直线", cls: "w-[48px] font-medium underline underline-offset-2" },
  { text: "直线.1", cls: "w-[39px]" },
];

const SpecTree = () => (
  <ul className="absolute top-[127px] left-0 flex h-[346px] flex-col justify-between text-[16px] text-white">
    {tree.map((t, i) => (
      <li key={i} className={`flex h-[25px] items-center justify-end overflow-hidden whitespace-nowrap ${t.cls}`}>
        {t.text}
      </li>
    ))}
  </ul>
);

// Geometry shares the window coordinate system, the view starts below the bars.
const Scene = () => (
  <svg
    viewBox="0 92 1728 873"
    className="absolute top-0 left-0 h-[873px] w-[1728px]"
    fill="none"
    fontFamily='"Noto Sans", "Noto Sans CJK SC", sans-serif'
  >
    <g stroke="#fff">
      <path d="M498 543L488 498M498 543l53-17M498 543l16 25M496 519l8 24" />
      <path d="M510 505l4 16 19-7M541 540l-19 7 6 9" />
      <path d="M627 558L1234 632" />
      <path d="M877 486l9 9M886 486l-9 9" />
    </g>
    <circle cx="498" cy="543" r="2.5" fill="#fff" />
    <g fill="#fff" fontSize="15">
      <text x="486" y="497">z</text>
      <text x="551" y="527">y</text>
      <text x="513" y="569">x</text>
    </g>
    <g stroke="#00d82c">
      <path d="M589 555l25-3-2 10zM607 547l20 7M614 556h12M641 556v10l27-4zM632 556l54 6M632 554l4-6M690 561l2-4" />
    </g>
    <circle cx="627" cy="558" r="3" fill="#00f020" />
    <g fill="#00e628" fontSize="14">
      <text x="649" y="559">43</text>
      <text x="580" y="575" fontSize="15">起点：</text>
    </g>
    <g stroke="#c8102c" strokeWidth="2">
      <path d="M681 562l-3-24h22M679 552l4 10 1-12M867 584l-5-24 22-2M865 574l4 10v-13" />
    </g>
    <g fill="#d0102c" fontSize="13" fontWeight="700">
      <text x="695" y="537">点 1：</text>
      <text x="880" y="559">点 2：</text>
    </g>
    <path d="M679 561l9 9M688 561l-9 9M683 559v13M865 583l9 9M874 583l-9 9M869 581v13" stroke="#f07020" />
    <g stroke="#dcc8fc" strokeWidth="1.6">
      <path d="M1606 145q16-4 30-2 40 6 46 38l-40 13-16 6z" fill="#1c405c" />
      <path d="M1597 240l30-10q22-10 37-6 14 6 15 16 1 14-15 22-20 12-36 13-12 3-22 0l-9-15z" fill="#1c405c" />
      <path d="M1602 132l26 112M1606 146l22 56-8 0zM1620 200l10 18" fill="#14144c" />
    </g>
    <circle cx="1602" cy="130" r="3.5" fill="#dcc8fc" />
    <circle cx="1629" cy="249" r="5" fill="#c80808" />
    <g fill="#f4e83c" fontSize="15">
      <text x="1618" y="133">z</text>
      <text x="1699" y="185">y</text>
    </g>
  </svg>
);

const CloseBox = () => (
  <button
    type="button"
    aria-label="关闭"
    className="mt-[9px] mr-px flex size-[25px] shrink-0 items-center justify-center self-start bg-[#c75050]"
  >
    <svg viewBox="0 0 8 8" className="size-2" aria-hidden="true">
      <path d="M1 1l6 6M7 1L1 7" stroke="#fff" strokeWidth="1.8" />
    </svg>
  </button>
);

const panelPlace = "absolute shadow-[2px_3px_8px_2px_rgba(20,20,50,0.45)]";

// A trailing "+" adds the fly-out arrow, "|" draws a divider.
type Panel = { x: number; y: number; wide: boolean; items: string[] };

const panels: Panel[] = [
  { x: 1367, y: 110, wide: false, items: ["graph"] },
  { x: 1369, y: 211, wide: false, items: ["dome", "layers", "layersRed", "blend"] },
  { x: 1436, y: 222, wide: false, items: ["flatCube", "thick", "wrap"] },
  { x: 1378, y: 387, wide: true, items: ["gear+", "scroll+"] },
  { x: 1442, y: 388, wide: false, items: ["cube", "cubeX"] },
  { x: 1505, y: 423, wide: false, items: ["hammer"] },
  { x: 1561, y: 109, wide: true, items: ["extrude+", "offset+", "sweep+", "fill", "loft", "blend2"] },
  { x: 1628, y: 102, wide: true, items: ["join+", "split+", "boundary+", "fillet+", "translate+", "extrapol"] },
  {
    x: 1700,
    y: 109,
    wide: true,
    items: ["pad", "groove", "rib", "stiff", "thickSurf", "closeSurf", "|", "draft+", "shell", "thread", "replace", "|", "assemble+"],
  },
  { x: 1704, y: 498, wide: false, items: ["analysis", "analysis2", "report"] },
  { x: 1567, y: 354, wide: true, items: ["repeat+", "pattern+", "copyGeo", "edit+", "factory+"] },
  { x: 1636, y: 341, wide: true, items: ["bump", "wrapCurve", "hole+", "morph", "develop"] },
];

const ToolPanel = ({ x, y, wide, items }: Panel) => (
  <section className={`${panelPlace} ${wide ? "w-9" : "w-[34px]"}`} style={{ left: x, top: y }}>
    <div className="flex h-[38px] justify-end bg-[#0078d7]">
      <CloseBox />
    </div>
    <div className="bg-[linear-gradient(to_right,#fff_0,#cfd0e6_10px,#cccde3_24px,#a2a2b2_100%)]">
      <div className="h-[13px] pt-1 pl-[3px]">
        <div className="h-[3px] w-4 border-b border-[#85859a] bg-white" />
      </div>
      {items.map((item, i) =>
        item === "|" ? (
          <div key={i} className="h-[7px] pt-[3px]">
            <div className="h-[2px] border-b border-[#85859a] bg-white" />
          </div>
        ) : (
          <button
            key={i}
            type="button"
            aria-label={item.replace("+", "")}
            className={`relative flex w-full pt-[3px] pl-[7px] ${item.endsWith("+") ? "h-[30px]" : "h-7"}`}
          >
            <Icon name={item.replace("+", "")} />
            {item.endsWith("+") && <Caret className="absolute right-[2px] bottom-px" />}
          </button>
        )
      )}
    </div>
  </section>
);

const wireGroups = [
  ["point+", "line+", "plane+"],
  ["proj+", "inter", "parallel+"],
  ["circle+", "spline+"],
];

const WidePanel = ({ place, title, children }: { place: string; title: string; children: React.ReactNode }) => (
  <section className={`${panelPlace} ${place}`}>
    <div className="flex h-[38px] items-center justify-between bg-[#0078d7] pl-[9px] text-white">
      <span className="overflow-hidden whitespace-nowrap">{title}</span>
      <CloseBox />
    </div>
    <div className="flex h-[35px] bg-[linear-gradient(to_bottom,#fff_0,#cfd0e6_10px,#cccde3_23px,#9b9ba8_100%)]">
      <div className="mt-[3px] ml-1 h-[17px] w-[3px] border-r border-[#85859a] bg-white" />
      {children}
    </div>
  </section>
);

const FlatButton = ({ item }: { item: string }) => (
  <button
    type="button"
    aria-label={item.replace("+", "")}
    className={`relative flex h-full pt-[7px] pl-[3px] ${item.endsWith("+") ? "w-[30px]" : "w-7"}`}
  >
    <Icon name={item.replace("+", "")} />
    {item.endsWith("+") && <Caret className="absolute right-0 bottom-[2px]" />}
  </button>
);

const WirePanel = () => (
  <WidePanel place="top-[208px] left-[1039px] w-[269px]" title="线框">
    <div className="ml-[7px] flex divide-x-2 divide-white">
      {wireGroups.map((g, i) => (
        <div key={i} className={`flex ${i === 0 ? "pr-[3px]" : "pl-1"}`}>
          {g.map((item) => (
            <FlatButton key={item} item={item} />
          ))}
        </div>
      ))}
    </div>
  </WidePanel>
);

const sunken = "border-2 border-t-[#74746c] border-l-[#74746c] border-r-white border-b-white";

type FieldProps = { id: string; label: string; value: string; tone?: string; disabled?: boolean };

const Field = ({ id, label, value, tone = "bg-[#c9e7cf] text-[#1c2a1c]", disabled }: FieldProps) => (
  <div className="flex h-[23px] items-center">
    <label htmlFor={id} className="w-[66px] shrink-0 whitespace-nowrap">
      {label}
    </label>
    <input
      id={id}
      defaultValue={value}
      disabled={disabled}
      className={`h-[23px] w-[161px] px-[2px] outline-none ${sunken} ${tone}`}
    />
  </div>
);

const SpinField = ({ id, label, value, disabled = false }: FieldProps) => (
  <div className="flex h-[25px] items-center">
    <label htmlFor={id} className="w-[66px] shrink-0">
      {label}
    </label>
    <div className={`flex h-[26px] ${sunken} ${disabled ? "w-[158px] bg-[#eeeeee]" : "w-[180px] bg-[#c9e7cf]"}`}>
      <input
        id={id}
        defaultValue={value}
        disabled={disabled}
        className={`w-full min-w-0 bg-transparent pl-px outline-none ${disabled ? "text-[#8c8c8c]" : "text-[#1c2a1c]"}`}
      />
      <div className="flex w-[23px] shrink-0 flex-col">
        {["增加", "减少"].map((name, i) => (
          <button
            key={name}
            type="button"
            aria-label={name}
            disabled={disabled}
            className="flex flex-1 items-center justify-center border border-t-white border-l-[#77777f] border-r-[#77777f] border-b-[#77777f] bg-[#eeeef2]"
          >
            {disabled ? (
              <span className={i === 0 ? "h-[3px] w-px rotate-45 bg-black" : "h-px w-[6px] bg-black"} />
            ) : (
              <Caret className={i === 0 ? "rotate-180" : ""} />
            )}
          </button>
        ))}
      </div>
    </div>
    {disabled && (
      <svg viewBox="0 0 22 22" className="ml-[1px] size-[22px]" aria-hidden="true">
        <P d="M1 7l6-5h14v13l-5 6H1z" f="#ece49c" />
        <P d="M1 7h8v14M4 11h4v7H4zM5 14h3" />
        <P d="M12 10V6q3-4 6 0v4" s="#484848" w={2} />
        <P d="M9 11l9-2 3 2v6l-6 4-6-2zM9 11l6 2 6-2M15 13v8" f="#707070" />
      </svg>
    )}
  </div>
);

const Radio = ({ id, label, checked = false }: { id: string; label: string; checked?: boolean }) => (
  <div className="flex items-center gap-[5px]">
    <input
      id={id}
      type="radio"
      name="lengthType"
      defaultChecked={checked}
      className="size-3 appearance-none rounded-full border border-[#4c4c3c] bg-[#fffbd8] checked:border-[#0c2454] checked:bg-radial-[at_35%_30%] checked:from-[#a8ccf4] checked:via-[#1c4c9c] checked:to-[#061c48]"
    />
    <label htmlFor={id}>{label}</label>
  </div>
);

const DialogButton = ({ text, dot }: { text: string; dot?: string }) => (
  <button
    type="button"
    className="flex h-[27px] w-16 items-center justify-center gap-[5px] border-[3px] border-t-[#e6e6fa] border-l-[#e6e6fa] border-r-[#8080a0] border-b-[#8080a0] bg-[#cbcbe8]"
  >
    {dot && <span className={`-mt-1 size-3 rounded-full bg-radial-[at_35%_30%] from-white ${dot}`} />}
    {text}
  </button>
);

const LineDialog = () => (
  <section className="absolute top-[214px] left-[190px] w-[274px] bg-linear-to-b from-[#ecdccc] via-[#f4e0c2] to-[#fbe4b8] shadow-[2px_3px_8px_2px_rgba(20,20,50,0.45)]">
    <div className="flex h-[37px] items-center bg-white pl-[9px] text-[#949494]">
      <h2 className="flex-1">直线定义</h2>
      <button type="button" aria-label="帮助" className="mr-[48px] text-[17px]">
        ?
      </button>
      <button type="button" aria-label="关闭" className="mr-6">
        <svg viewBox="0 0 12 12" className="size-3" aria-hidden="true">
          <path d="M0 0l12 12M12 0L0 12" stroke="#808080" />
        </svg>
      </button>
    </div>
    <form className="flex flex-col px-3 pt-3 pb-[10px] text-[#1c1c1c]">
      <div className="flex h-[27px] items-center">
        <label htmlFor="lineType" className="w-11 shrink-0 whitespace-nowrap">
          线型：
        </label>
        <Combo id="lineType" label="线型" value="点-点" width="w-[182px]" />
        <button
          type="button"
          aria-label="锁定"
          className="ml-px flex size-6 items-center justify-center border border-t-white border-l-white border-r-[#8c846c] border-b-[#8c846c]"
        >
          <svg viewBox="0 0 16 14" className="h-[14px] w-4" aria-hidden="true">
            <path d="M1 7V4q0-3 3-3t3 3" fill="none" stroke="#0a7c18" strokeWidth="2" />
            <P d="M5 5l6-3 5 2v6l-5 4-6-3zM5 5l6 3 5-4M11 8v6" f="#22a834" s="#064c10" />
          </svg>
        </button>
      </div>
      <div className="mt-[5px] flex flex-col gap-[5px]">
        <Field id="p1" label="点 1：" value="点.1" />
        <Field id="p2" label="点 2：" value="点.2" />
        <Field id="support" label="支持面：" value="默认（无）" tone="bg-[#0078d7] text-white" />
      </div>
      <div className="mt-[5px] flex flex-col gap-[7px]">
        <SpinField id="start" label="起点：" value="43mm" />
        <Field id="upto1" label="直到 1：" value="没有选择" />
      </div>
      <div className="mt-[6px] flex flex-col gap-[7px]">
        <SpinField id="end" label="终点：" value="132mm" disabled />
        <Field id="upto2" label="直到 2：" value="没有选择" tone="bg-[#c9e7cf] text-[#7c867c]" disabled />
      </div>
      <fieldset className="mt-[5px]">
        <legend className="flex h-5 w-full items-center">
          长度类型
          <span className="mb-[3px] h-[2px] flex-1 border-b border-white bg-[#8c8c80]" />
        </legend>
        <div className="mt-1 grid grid-cols-[60px_1fr] gap-y-2 leading-5">
          <Radio id="r1" label="长度" />
          <Radio id="r2" label="起点无限" />
          <Radio id="r3" label="无限" />
          <Radio id="r4" label="终点无限" checked />
        </div>
      </fieldset>
      <div className="mt-[9px] flex h-5 items-center gap-[3px] text-[#a49c8c]">
        <input id="mirror" type="checkbox" disabled className="size-3 appearance-none border border-[#5c4c2c]" />
        <label htmlFor="mirror">镜像范围</label>
      </div>
      <div className="relative z-10 mt-[13px] mr-[-2px] flex justify-end gap-2">
        <DialogButton text="确定" dot="via-[#20a020] to-[#0a5c10]" />
        <DialogButton text="取消" dot="via-[#e03030] to-[#801414]" />
        <DialogButton text="预览" />
      </div>
    </form>
    <svg viewBox="0 0 46 34" className="absolute bottom-0 left-0 h-[34px] w-[46px]" aria-hidden="true">
      <defs>
        <radialGradient id="glow" cx="50%" cy="65%" r="55%">
          <stop offset="0" stopColor="#ffa818" />
          <stop offset="0.500" stopColor="#ffc458" />
          <stop offset="1" stopColor="#ffe0a0" stopOpacity="0" />
        </radialGradient>
        <linearGradient id="earth" x1="0" y1="1" x2="1" y2="0">
          <stop offset="0" stopColor="#1c2830" />
          <stop offset="0.6" stopColor="#4c88a8" />
          <stop offset="1" stopColor="#b8e0f0" />
        </linearGradient>
      </defs>
      <rect width="46" height="34" fill="url(#glow)" />
      <path d="M0 17q28-2 40 17H0z" fill="url(#earth)" />
      <path d="M6 17q22 0 33 17" fill="none" stroke="#b8dcec" strokeWidth="2" />
    </svg>
    <svg viewBox="0 0 12 20" className="absolute top-[334px] left-[117px] h-5 w-3" aria-hidden="true">
      <path d="M1 1v15l3-3 3 6 2-1-2-6h4z" fill="#fff" stroke="#333" />
    </svg>
  </section>
);

const bottomTools = [
  "print", "cut", "copy", "paste", "undo+", "redo+", "help", "|",
  "fx", "speech", "chain", "table+", "graphTree", "lock+", "brace", "|",
  "fly", "fit", "pan", "rotate", "zoomIn", "zoomOut", "normal", "multi", "isoCube+", "cylinder+", "hide", "swap", "|",
  "toggle", "|",
  "ruler", "caliper", "weight", "|",
  "camera", "|",
  "swirl", "handSwirl", "axis", "list", "grid+", "sectionBox+", "boxTeal", "bolt", "greyCurve", "treeIn", "paint+", "stack", "book+",
];

const BottomBar = () => (
  <div className={`flex h-[38px] items-center border-b border-[#5a5a68] pt-1 pl-px ${barSkin}`}>
    {bottomTools.map((item, i) =>
      item === "|" ? (
        <ToolSep key={i} />
      ) : (
        <ToolButton key={i} name={item.replace("+", "")} menu={item.endsWith("+")} narrow={item === "chain"} />
      )
    )}
    <div className="ml-[2px] flex">
      <Combo id="body" label="几何图形集" value="0002_直线" width="w-[219px]" />
    </div>
    <ToolSep />
    <ToolButton name="dimGrey" />
    <ToolButton name="dim" />
    <ToolSep />
    <ToolButton name="abc" menu />
    <ToolSep />
  </div>
);

const StatusBar = () => (
  <div className="flex h-[27px] items-center bg-[#cccee4]">
    <p className="-ml-1 flex-1">选择支持面或修改数据</p>
    <label htmlFor="power" className="mr-[5px]">
      起点
    </label>
    <input
      id="power"
      defaultValue="43mm"
      className={`h-[26px] w-[271px] bg-[#c9e7cf] px-px pb-[2px] text-[15px] outline-none ${sunken}`}
    />
  </div>
);

type AppItem = { name: string; running?: boolean; active?: boolean; art: React.ReactNode };

const apps: AppItem[] = [
  {
    name: "截图工具",
    art: (
      <>
        <ellipse cx="14" cy="11" rx="12" ry="9" transform="rotate(-25 14 11)" fill="#b09c98" />
        <ellipse cx="15" cy="9" rx="12" ry="7.5" transform="rotate(-25 15 9)" fill="#f4f0f0" stroke="#b83a34" />
        <path d="M15 4v13l3 5M9 6l9 12" fill="none" stroke="#8c8c90" strokeWidth="1.5" />
        <circle cx="18" cy="24" r="3.5" fill="none" stroke="#2c7cac" strokeWidth="2" />
        <circle cx="24" cy="19" r="3.5" fill="none" stroke="#2c7cac" strokeWidth="2" />
      </>
    ),
  },
  {
    name: "OneNote",
    running: true,
    art: (
      <>
        <rect x="7" y="1" width="22" height="28" rx="1" fill="#b468d8" />
        <path d="M23 1h6v7h-6z" fill="#c888e8" />
        <path d="M23 8h6v7h-6z" fill="#a050cc" />
        <path d="M23 15h6v7h-6z" fill="#8838b4" />
        <path d="M7 23h22v6H7z" fill="#7c2cac" />
        <rect x="1" y="7" width="15" height="16" rx="1" fill="#7820a4" />
        <text x="4" y="20" fontSize="13" fontWeight="700" fill="#fff">N</text>
      </>
    ),
  },
  {
    name: "有道",
    running: true,
    art: (
      <>
        <rect width="30" height="30" rx="6" fill="#f0141c" />
        <text x="3" y="20" fontSize="12" fontWeight="700" fill="#fff">有道</text>
      </>
    ),
  },
  {
    name: "慧编程",
    art: (
      <>
        <circle cx="15" cy="15" r="15" fill="#ea1c24" />
        <path d="M6 11v8M10 9v11M14 11v9M18 7v13M22 20V10M22 10h3v7h-3M22 20v3" fill="none" stroke="#fff" strokeWidth="2.2" />
      </>
    ),
  },
  {
    name: "Edge",
    running: true,
    art: (
      <>
        <circle cx="15" cy="15" r="15" fill="#1c7cd4" />
        <path d="M1 12Q4 0 16 0q13 1 14 12 0 9-9 9-5-1-3-4 2-6-4-8Q6 7 1 12z" fill="#40c8a0" />
        <path d="M1 12q6-6 13-3 5 3 4 8-1-4-5-3-6 3-3 9 3 6 10 6Q4 31 0 17z" fill="#1464b4" />
        <path d="M18 17q-2 5 3 5 5 0 8-4-2 8-9 11-9 1-11-6-2-8 4-9 4-1 5 3z" fill="#28507c" />
      </>
    ),
  },
  {
    name: "Chrome",
    art: (
      <>
        <circle cx="15" cy="15" r="13.5" fill="#f4c020" />
        <path d="M15 15L3.300 8.200A13.500 13.500 0 0 1 26.700 8.200L27 9H15z" fill="#dc4434" />
        <path d="M15 28.500A13.500 13.500 0 0 1 3.300 8.200L10 19l5 2z" fill="#30a050" />
        <path d="M15 28.500L20 18l-5 3z" fill="#30a050" />
        <circle cx="15" cy="15" r="6.5" fill="#fff" />
        <circle cx="15" cy="15" r="5" fill="#4484f0" />
      </>
    ),
  },
  {
    name: "文件资源管理器",
    running: true,
    art: (
      <>
        <path d="M1 4h11l2 3h15v18H1z" fill="#e8a41c" />
        <path d="M1 9h28v17H1z" fill="#fbd868" />
        <path d="M6 28V17h18v11h-5v-5h-8v5z" fill="#3c90d4" />
      </>
    ),
  },
  {
    name: "CATIA",
    running: true,
    active: true,
    art: (
      <>
        <defs>
          <radialGradient id="flare" cx="62%" cy="42%" r="50%">
            <stop offset="0" stopColor="#fff4c8" />
            <stop offset="0.350" stopColor="#e08830" />
            <stop offset="1" stopColor="#140c0c" />
          </radialGradient>
        </defs>
        <rect x="1" y="2" width="28" height="26" fill="url(#flare)" />
        <path d="M2 6q12 6 14 21H2z" fill="#1860a8" />
        <path d="M3 6q11 6 13 21" fill="none" stroke="#90d4f8" strokeWidth="2" />
        <rect x="1" y="2" width="28" height="26" fill="none" stroke="#fff" strokeWidth="1.5" />
      </>
    ),
  },
  {
    name: "微信",
    running: true,
    art: (
      <>
        <ellipse cx="11" cy="12" rx="11" ry="9.5" fill="#34c860" />
        <path d="M4 18l-1 6 6-3z" fill="#34c860" />
        <ellipse cx="21" cy="19" rx="9" ry="7.5" fill="#ececec" />
        <path d="M24 24l3 4-6-2z" fill="#ececec" />
        <circle cx="7" cy="9" r="1.5" fill="#186030" />
        <circle cx="15" cy="9" r="1.5" fill="#186030" />
        <circle cx="18" cy="17" r="1.2" fill="#808080" />
        <circle cx="24" cy="17" r="1.2" fill="#808080" />
      </>
    ),
  },
  {
    name: "命令提示符",
    running: true,
    art: (
      <>
        <rect x="1" y="4" width="28" height="22" fill="#0c0c0c" stroke="#a4a4a4" strokeWidth="1.5" />
        <path d="M1 4h28v3H1z" fill="#d0d0d0" />
        <path d="M2 16Q14 12 28 12V8H2z" fill="#484848" />
        <path d="M4 9h3M4 11h3M9 9l3 3M13 12h5" stroke="#fff" />
      </>
    ),
  },
  {
    name: "笔记",
    running: true,
    art: (
      <>
        <rect width="30" height="30" rx="4" fill="#3484f4" />
        <path d="M8 22l1-8 8-8q6 1 6 7l-8 8z" fill="#fff" />
      </>
    ),
  },
  {
    name: "PyCharm",
    running: true,
    art: (
      <>
        <path d="M2 2h25l1 12-2 14H3L2 15z" fill="#d4e83c" />
        <path d="M2 2h12L2 14z" fill="#2cd088" />
        <rect x="5" y="5" width="20" height="20" fill="#041008" />
        <text x="7" y="15" fontSize="11" fontWeight="700" fill="#fff">PC</text>
        <path d="M7 21h8" stroke="#fff" strokeWidth="1.5" />
      </>
    ),
  },
];

const TaskButton = ({ name, running, active, art }: AppItem) => (
  <button
    type="button"
    aria-label={name}
    className={`flex h-full w-[62px] shrink-0 flex-col items-center ${active ? "bg-[#67615f]" : ""}`}
  >
    <svg
      viewBox="0 0 30 30"
      className="mt-[10px] size-[30px]"
      fontFamily='"Noto Sans", "Noto Sans CJK SC", sans-serif'
      aria-hidden="true"
    >
      {art}
    </svg>
    {running && <span className={`mt-auto h-[3px] bg-[#76b4e4] ${active ? "w-full" : "w-[51px]"}`} />}
  </button>
);

const TaskBar = () => (
  <footer className="flex h-[50px] items-center overflow-hidden bg-linear-to-r from-[#2a2c2a] via-[#38302a] to-[#2f2d24] text-white">
    <input
      aria-label="搜索"
      placeholder="在这里输入你要搜索的内容"
      className="h-full w-[394px] shrink-0 border-y border-[#b8b8b8] bg-[#f0f0f0] pl-[14px] text-[19px] outline-none placeholder:text-[#3a3a3a]"
    />
    <div className="ml-1 flex h-full">
      {apps.map((a) => (
        <TaskButton key={a.name} {...a} />
      ))}
    </div>
    <div className="ml-auto flex h-full shrink-0 items-center">
      <svg viewBox="0 0 28 28" className="h-7 w-7" aria-hidden="true">
        <path d="M1 15Q3 2 14 2t13 13q-3-3-6 0-3-3-7 0-4-3-7 0-3-3-6 0z" fill="#58a4e4" />
        <path d="M14 2q-6 4-7 13 4-3 7 0V2z" fill="#8cc8f4" />
        <path d="M14 14v10q-1 4-4 2" fill="none" stroke="#a0a0a0" strokeWidth="2" />
      </svg>
      <span className="ml-[11px] w-[51px] text-[18px]">正...</span>
      <div className="flex items-center gap-2">
        <svg viewBox="0 0 22 22" className="size-[22px]" fill="none" stroke="#fff" strokeWidth="1.5" aria-hidden="true">
          <path d="M3 15l8-8 8 8" />
        </svg>
        <svg viewBox="0 0 22 22" className="size-[22px]" fill="none" stroke="#fff" strokeWidth="1.5" aria-hidden="true">
          <rect x="7" y="1" width="8" height="14" rx="2" fill="#fff" />
          <path d="M5 12v2q0 4 6 4t6-4v-2M11 17v4M7 21h8" />
        </svg>
        <svg viewBox="0 0 22 22" className="size-[22px]" fill="none" stroke="#fff" strokeWidth="1.5" aria-hidden="true">
          <rect x="6" y="7" width="14" height="9" />
          <rect x="8" y="9" width="10" height="5" fill="#fff" stroke="none" />
          <path d="M21 10v3M1 4h5v4H1zM3 8v6h3M2 4V2M5 4V2" />
        </svg>
        <svg viewBox="0 0 22 22" className="size-[22px]" fill="none" stroke="#c8c8c8" strokeWidth="1.4" aria-hidden="true">
          <path d="M4 19Q4 5 19 4M8 19q0-10 11-11M12 19q0-7 7-7" />
          <circle cx="17" cy="17" r="1.5" fill="#fff" stroke="none" />
        </svg>
        <svg viewBox="0 0 22 22" className="size-[22px]" fill="none" stroke="#fff" strokeWidth="1.3" aria-hidden="true">
          <path d="M1 8h3l4-4v14l-4-4H1zM11 9q1 2 0 4M14 7q3 4 0 8M17 4q5 7 0 14" />
        </svg>
      </div>
      <span className="ml-[9px] w-[36px] text-[17px] font-medium">中</span>
      <span className="flex size-[19px] items-center justify-center bg-white text-[15px] leading-none text-black">拼</span>
      <div className="ml-[22px] w-[54px] text-[15px] leading-6 whitespace-nowrap">
        <p className="ml-[17px]">19:37</p>
        <p>2022/3/</p>
      </div>
    </div>
  </footer>
);

const App = () => {
  return (
    <div className='flex min-h-screen w-full flex-col overflow-hidden bg-[#cccee4] font-["Noto_Sans","Noto_Sans_CJK_SC",sans-serif] text-[15px] text-black'>
      <TitleBar />
      <MenuBar />
      <GraphicBar />
      <main className="relative min-h-[700px] flex-1 overflow-hidden bg-[linear-gradient(to_bottom,#333364_0,#40406f_45%,#474776_64%,#5c5b83_74%,#a8aac2_100%)]">
        <SpecTree />
        <Scene />
        <WidePanel place="top-[117px] left-[1035px] w-[45px]" title="草">
          <div className="ml-[7px]">
            <FlatButton item="sketch+" />
          </div>
        </WidePanel>
        <WirePanel />
        {panels.map((p) => (
          <ToolPanel key={`${p.x}-${p.y}`} {...p} />
        ))}
        <LineDialog />
      </main>
      <BottomBar />
      <StatusBar />
      <TaskBar />
    </div>
  );
};

export default App;
